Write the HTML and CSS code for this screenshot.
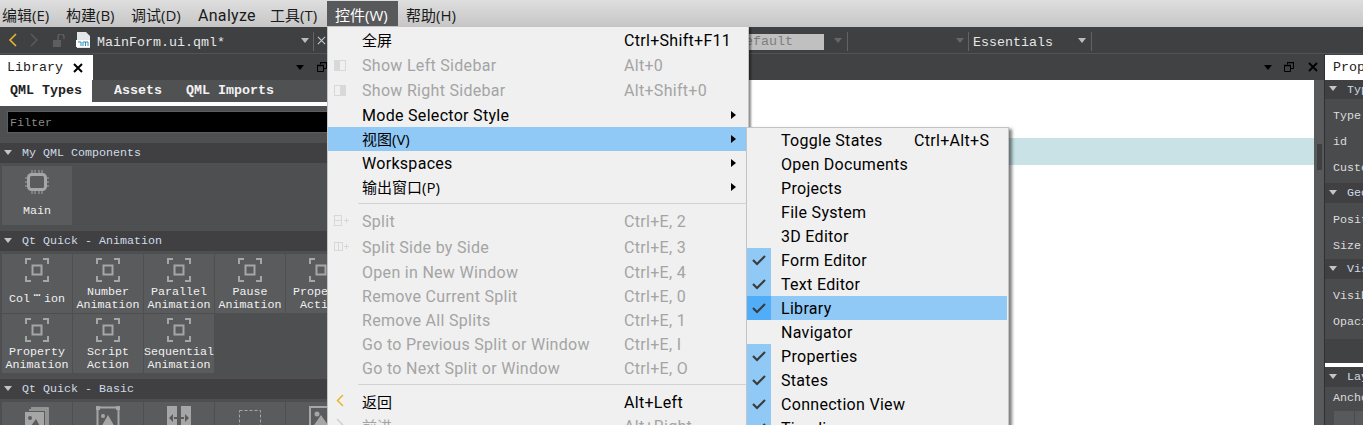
FILE: index.html
```html
<!DOCTYPE html>
<html lang="zh">
<head>
<meta charset="utf-8">
<title>Qt Creator</title>
<link rel="stylesheet" href="styles.css">
</head>
<body>
<svg class="defs" width="0" height="0" aria-hidden="true">
  <symbol id="i-frame" viewBox="0 0 24 24">
    <path d="M1 6V1H6M18 1H23V6M23 18V23H18M6 23H1V18" fill="none" stroke="#a6a6a6" stroke-width="2"/>
    <rect x="7.5" y="7.5" width="9" height="9" fill="none" stroke="#a6a6a6" stroke-width="2"/>
  </symbol>
  <symbol id="i-chip" viewBox="0 0 24 24">
    <rect x="3.5" y="4.5" width="17" height="15" rx="3" fill="none" stroke="#a6a6a6" stroke-width="3"/>
    <path d="M7 0V3M10 0V3M14 0V3M17 0V3M7 21V24M10 21V24M14 21V24M17 21V24M0 8H3M0 12H3M0 16H3M21 8H24M21 12H24M21 16H24" stroke="#a6a6a6" stroke-width="1"/>
  </symbol>
  <symbol id="i-stack" viewBox="0 0 24 24">
    <path d="M6 2H23V19" fill="none" stroke="#a6a6a6" stroke-width="1.5"/>
    <path d="M4 4H21V21" fill="none" stroke="#a6a6a6" stroke-width="1.5"/>
    <rect x="0" y="6" width="19" height="18" fill="#a6a6a6"/>
    <circle cx="5" cy="12" r="2" fill="#5a5b5d"/>
    <path d="M3 24L11 13L17 24Z" fill="#5a5b5d"/>
  </symbol>
  <symbol id="i-border" viewBox="0 0 24 24">
    <rect x="1.500" y="1.500" width="21" height="21" fill="none" stroke="#a6a6a6" stroke-width="2"/>
    <path d="M0 0h4v4H0zM20 0h4v4h-4z" fill="#a6a6a6"/>
    <path d="M4 23L12 9L20 23Z" fill="#a6a6a6"/>
    <circle cx="7" cy="10" r="2" fill="#a6a6a6"/>
  </symbol>
  <symbol id="i-flip" viewBox="0 0 24 24">
    <path d="M0 0H10V24H0ZM14 0H24V24H14Z" fill="#a6a6a6"/>
    <path d="M2 12L6 8V16ZM22 12L18 8V16Z" fill="#5a5b5d"/>
    <path d="M7 11H10V13H7ZM14 11H17V13H14Z" fill="#5a5b5d"/>
  </symbol>
  <symbol id="i-dash" viewBox="0 0 24 24">
    <rect x="1.500" y="4.500" width="21" height="20" fill="none" stroke="#a6a6a6" stroke-dasharray="3 2"/>
  </symbol>
  <symbol id="i-image" viewBox="0 0 24 24">
    <rect x="1" y="1" width="22" height="23" fill="none" stroke="#a6a6a6" stroke-width="2"/>
    <circle cx="8" cy="8" r="2.500" fill="#a6a6a6"/>
    <path d="M3 22L12 9L21 22Z" fill="#a6a6a6"/>
  </symbol>
  <symbol id="i-check" viewBox="0 0 14 12">
    <path d="M1 6L5 10L13 2" fill="none" stroke="#3a3a3a" stroke-width="2"/>
  </symbol>
  <symbol id="i-float" viewBox="0 0 10 10">
    <path d="M3.500 2.500V.5H9.500V6.500H7M.5 3.500H6.500V9.500H.5Z" fill="none" stroke="#000" stroke-width="1"/>
    <path d="M3 .5H10M0 3.500H7" stroke="#000" stroke-width="1.500"/>
  </symbol>
  <symbol id="i-close" viewBox="0 0 10 10">
    <path d="M1 1L9 9M9 1L1 9" stroke="#000" stroke-width="1.800"/>
  </symbol>
</svg>

<div class="app">
  <nav class="menubar">
    <span class="top w-e cjk">编辑(E)</span>
    <span class="top w-b cjk">构建(B)</span>
    <span class="top w-d cjk">调试(D)</span>
    <span class="top w-a">Analyze</span>
    <span class="top w-t cjk">工具(T)</span>
    <span class="top top-on cjk">控件(W)</span>
    <span class="top cjk">帮助(H)</span>
  </nav>

  <div class="toolbar">
    <svg class="tb-nav" width="10" height="14" viewBox="0 0 10 14"><path d="M8 1L2 7L8 13" fill="none" stroke="#e5b72b" stroke-width="1.600"/></svg>
    <svg class="tb-nav" width="10" height="14" viewBox="0 0 10 14"><path d="M2 1L8 7L2 13" fill="none" stroke="#595a5c" stroke-width="1.600"/></svg>
    <svg class="tb-lock" width="12" height="13" viewBox="0 0 12 13"><path d="M0 6H8V13H0Z" fill="#5d5e60"/><path d="M5 6V3A2.500 2.500 0 0 1 11 3V5" fill="none" stroke="#5d5e60" stroke-width="1.500"/></svg>
    <svg class="tb-file" width="15" height="16" viewBox="0 0 15 16"><path d="M1 0H10L14 4V16H1Z" fill="#e4e6e8"/><rect x="0" y="8" width="14" height="7" fill="#fff"/><path d="M2 10H5V14M7 14V10H12V14M9.500 10V14" fill="none" stroke="#2c8fb8" stroke-width="1"/></svg>
    <span class="tb-name">MainForm.ui.qml*</span>
    <i class="tri tri-light tb-arrow"></i>
    <i class="tb-sep"></i>
    <svg class="tb-x" width="9" height="9" viewBox="0 0 10 10"><path d="M1 1L9 9M9 1L1 9" stroke="#c8c8c8" stroke-width="1.200"/></svg>
    <span class="tb-combo">Default</span>
    <i class="tri tri-dim tb-arrow2"></i>
    <i class="tb-sep"></i>
    <i class="tri tri-dim tb-arrow3"></i>
    <i class="tb-sep tb-sep3"></i>
    <span class="tb-kit">Essentials</span>
    <i class="tri tri-light tb-arrow4"></i>
    <i class="tb-sep"></i>
  </div>

  <main class="workspace">
    <section class="left">
      <header class="dock-head">
        <div class="dock-tab lib-tab"><span>Library</span>
          <svg class="tab-x" width="10" height="10" viewBox="0 0 10 10"><path d="M1 1L9 9M9 1L1 9" stroke="#000" stroke-width="2"/></svg>
        </div>
        <div class="dock-tools left-tools">
          <i class="tri tri-black"></i>
          <svg width="10" height="10"><use href="#i-float"/></svg>
        </div>
      </header>
      <div class="lib-tabs">
        <span class="lib-t lib-t-on">QML Types</span>
        <div class="lib-t-rest">
          <span class="lib-t lib-t-a">Assets</span>
          <span class="lib-t lib-t-b">QML Imports</span>
        </div>
      </div>
      <div class="left-body">
        <div class="filter"><span>Filter</span></div>

        <h3 class="sec"><i class="tri tri-sec"></i>My QML Components</h3>
        <div class="tiles">
          <div class="tile"><svg class="ico"><use href="#i-chip"/></svg><div class="lbl">Main</div></div>
        </div>

        <h3 class="sec"><i class="tri tri-sec"></i>Qt Quick - Animation</h3>
        <div class="tiles">
          <div class="tile"><svg class="ico"><use href="#i-frame"/></svg><div class="lbl">Col<span class="ell">⋯</span>ion</div></div>
          <div class="tile"><svg class="ico"><use href="#i-frame"/></svg><div class="lbl">Number<br>Animation</div></div>
          <div class="tile"><svg class="ico"><use href="#i-frame"/></svg><div class="lbl">Parallel<br>Animation</div></div>
          <div class="tile"><svg class="ico"><use href="#i-frame"/></svg><div class="lbl">Pause<br>Animation</div></div>
          <div class="tile"><svg class="ico"><use href="#i-frame"/></svg><div class="lbl">Property<br>Action</div></div>
          <div class="tile"><svg class="ico"><use href="#i-frame"/></svg><div class="lbl">Property<br>Animation</div></div>
          <div class="tile"><svg class="ico"><use href="#i-frame"/></svg><div class="lbl">Script<br>Action</div></div>
          <div class="tile"><svg class="ico"><use href="#i-frame"/></svg><div class="lbl">Sequential<br>Animation</div></div>
        </div>

        <h3 class="sec"><i class="tri tri-sec"></i>Qt Quick - Basic</h3>
        <div class="tiles">
          <div class="tile"><svg class="ico"><use href="#i-stack"/></svg></div>
          <div class="tile"><svg class="ico"><use href="#i-border"/></svg></div>
          <div class="tile"><svg class="ico"><use href="#i-flip"/></svg></div>
          <div class="tile"><svg class="ico"><use href="#i-dash"/></svg></div>
          <div class="tile"><svg class="ico"><use href="#i-image"/></svg></div>
        </div>
      </div>
    </section>

    <section class="center">
      <header class="dock-head center-head">
        <div class="dock-tools center-tools">
          <i class="tri tri-black"></i>
          <svg width="10" height="10"><use href="#i-float"/></svg>
          <svg width="10" height="10"><use href="#i-close"/></svg>
        </div>
      </header>
      <div class="canvas-wrap">
        <div class="canvas"><div class="band"></div></div>
        <div class="scroll"><div class="thumb"></div></div>
      </div>
    </section>

    <section class="right">
      <header class="dock-head"><div class="dock-tab prop-tab">Properties</div></header>
      <h3 class="sec psec psec-first"><i class="tri tri-sec"></i>Type</h3>
      <div class="props"><p>Type</p><p>id</p><p>Custom</p></div>
      <h3 class="sec psec"><i class="tri tri-sec"></i>Geometry</h3>
      <div class="props props-two"><p>Position</p><p>Size</p></div>
      <h3 class="sec psec"><i class="tri tri-sec"></i>Visibility</h3>
      <div class="props props-two"><p>Visible</p><p>Opacity</p></div>
      <div class="prop-gap"></div>
      <h3 class="sec psec"><i class="tri tri-sec"></i>Layout</h3>
      <div class="anchors">
        <p>Anchors</p>
        <div class="anchor-btns"><i></i><i></i></div>
      </div>
    </section>
  </main>

  <div class="menu main-menu">
    <div class="row r-tall"><span class="t cjk">全屏</span><span class="k">Ctrl+Shift+F11</span></div>
    <div class="row r-tall off">
      <svg class="mi" width="13" height="11" viewBox="0 0 13 11"><rect x=".5" y=".5" width="11" height="10" fill="none" stroke="#d8d8d8"/><rect x="1" y="1" width="5" height="9" fill="#d8d8d8"/></svg>
      <span class="t">Show Left Sidebar</span><span class="k">Alt+0</span></div>
    <div class="row r-tall off">
      <svg class="mi" width="13" height="11" viewBox="0 0 13 11"><rect x=".5" y=".5" width="11" height="10" fill="none" stroke="#d8d8d8"/><rect x="6" y="1" width="5" height="9" fill="#d8d8d8"/></svg>
      <span class="t">Show Right Sidebar</span><span class="k">Alt+Shift+0</span></div>
    <div class="row"><span class="t">Mode Selector Style</span><i class="tri-r"></i></div>
    <div class="row on"><span class="t cjk">视图(V)</span><i class="tri-r"></i></div>
    <div class="row"><span class="t">Workspaces</span><i class="tri-r"></i></div>
    <div class="row"><span class="t cjk">输出窗口(P)</span><i class="tri-r"></i></div>
    <div class="sep"></div>
    <div class="row r-split off">
      <svg class="mi" width="15" height="11" viewBox="0 0 15 11"><rect x=".5" y=".5" width="7" height="10" fill="none" stroke="#d8d8d8"/><path d="M0 5.500H8M10 5.500H15M12.500 3V8" stroke="#d8d8d8"/></svg>
      <span class="t">Split</span><span class="k">Ctrl+E, 2</span></div>
    <div class="row r-split off">
      <svg class="mi" width="15" height="11" viewBox="0 0 15 11"><rect x=".5" y="1.500" width="8" height="8" fill="none" stroke="#d8d8d8"/><path d="M4.500 1V10M10 5.500H15M12.500 3V8" stroke="#d8d8d8"/></svg>
      <span class="t">Split Side by Side</span><span class="k">Ctrl+E, 3</span></div>
    <div class="row off"><span class="t">Open in New Window</span><span class="k">Ctrl+E, 4</span></div>
    <div class="row off"><span class="t">Remove Current Split</span><span class="k">Ctrl+E, 0</span></div>
    <div class="row off"><span class="t">Remove All Splits</span><span class="k">Ctrl+E, 1</span></div>
    <div class="row off"><span class="t">Go to Previous Split or Window</span><span class="k">Ctrl+E, I</span></div>
    <div class="row off"><span class="t">Go to Next Split or Window</span><span class="k">Ctrl+E, O</span></div>
    <div class="sep"></div>
    <div class="row r-nav">
      <svg class="mi mi-back" width="8" height="13" viewBox="0 0 8 13"><path d="M7 1L1.500 6.500L7 12" fill="none" stroke="#e5b72b" stroke-width="1.500"/></svg>
      <span class="t cjk">返回</span><span class="k">Alt+Left</span></div>
    <div class="row r-nav off">
      <svg class="mi mi-back" width="8" height="13" viewBox="0 0 8 13"><path d="M1 1L6.500 6.500L1 12" fill="none" stroke="#d0d0d0" stroke-width="1.500"/></svg>
      <span class="t cjk">前进</span><span class="k">Alt+Right</span></div>
  </div>

  <div class="menu sub-menu">
    <div class="srow"><span class="c"></span><span class="st">Toggle States</span><span class="sk">Ctrl+Alt+S</span></div>
    <div class="srow"><span class="c"></span><span class="st">Open Documents</span></div>
    <div class="srow"><span class="c"></span><span class="st">Projects</span></div>
    <div class="srow"><span class="c"></span><span class="st">File System</span></div>
    <div class="srow"><span class="c"></span><span class="st">3D Editor</span></div>
    <div class="srow"><span class="c c-on"><svg width="14" height="12"><use href="#i-check"/></svg></span><span class="st">Form Editor</span></div>
    <div class="srow"><span class="c c-on"><svg width="14" height="12"><use href="#i-check"/></svg></span><span class="st">Text Editor</span></div>
    <div class="srow on"><span class="c c-hot"><svg width="14" height="12"><use href="#i-check"/></svg></span><span class="st">Library</span></div>
    <div class="srow"><span class="c"></span><span class="st">Navigator</span></div>
    <div class="srow"><span class="c c-on"><svg width="14" height="12"><use href="#i-check"/></svg></span><span class="st">Properties</span></div>
    <div class="srow"><span class="c c-on"><svg width="14" height="12"><use href="#i-check"/></svg></span><span class="st">States</span></div>
    <div class="srow"><span class="c c-on"><svg width="14" height="12"><use href="#i-check"/></svg></span><span class="st">Connection View</span></div>
    <div class="srow"><span class="c c-on"><svg width="14" height="12"><use href="#i-check"/></svg></span><span class="st">Timeline</span></div>
  </div>
</div>
</body>
</html>
```

FILE: styles.css
```css
* { box-sizing: border-box; }
html, body { margin: 0; padding: 0; }
body {
  width: 1363px;
  height: 425px;
  overflow: hidden;
  background: #414244;
  font-family: Roboto, "Noto Sans CJK SC", sans-serif;
}
.defs { position: absolute; }
.app {
  position: relative;
  width: 1363px;
  height: 425px;
  overflow: hidden;
  display: flex;
  flex-direction: column;
}
p, h3 { margin: 0; font-weight: normal; }
.cjk { font-family: "Open Sans", "Noto Sans CJK SC", sans-serif; font-size: 15px; letter-spacing: 0; }

/* menu bar */
.menubar {
  height: 27px;
  flex: none;
  display: flex;
  padding-top: 1px;
  background: linear-gradient(#dedede, #c6c6c6);
  font-size: 16px;
  color: #1a1a1a;
}
.top { height: 25px; line-height: 28px; padding: 0 8px; }
.w-e { padding: 0 0 0 2px; width: 66px; }
.w-b { padding: 0; width: 65px; }
.w-d { padding: 0; width: 67px; }
.w-a { padding: 0; width: 72px; line-height: 30px; letter-spacing: .3px; }
.w-t { padding: 0; width: 57px; }
.top-on { width: 71px; background: #58595b; color: #fff; }

/* toolbar */
.toolbar {
  height: 27px;
  flex: none;
  display: flex;
  align-items: center;
  background: #3f4042;
  border-bottom: 1px solid #525355;
  font: 13.33px "Liberation Mono", monospace;
  color: #e6e6e6;
}
.tb-nav { flex: none; margin-left: 8px; }
.tb-nav + .tb-nav { margin-left: 11px; }
.tb-lock { flex: none; margin-left: 14px; }
.tb-file { flex: none; margin-left: 11px; }
.tb-name { flex: none; margin-left: 6px; width: 204px; padding-top: 4px; }
.tb-arrow { margin-left: 0; }
.tb-sep { flex: none; width: 1px; height: 19px; background: #626365; margin-top: 3px; }
.tb-arrow + .tb-sep { margin-left: 4px; }
.tb-x { flex: none; margin-left: 3px; }
.tb-combo {
  flex: none;
  margin: 4px 0 0 408px;
  width: 90px;
  height: 16px;
  line-height: 16px;
  padding-left: 3px;
  background: #c0c0c0;
  color: #7e7e7e;
  overflow: hidden;
}
.tb-arrow2 { margin: 0 5px 0 10px; }
.tb-arrow3 { margin: 0 4px 0 108px; }
.tb-kit { flex: none; width: 105px; margin-left: 4px; padding-top: 4px; }
.tb-arrow4 { margin-right: 5px; }

.tri {
  display: inline-block;
  flex: none;
  width: 0;
  height: 0;
  border-style: solid;
  border-width: 5px 4px 0;
  border-color: transparent;
}
.tri-light { border-top-color: #bcbcbc; }
.tri-dim { border-top-color: #66676a; }
.tri-black { border-top-color: #000; }
.tri-sec { border-top-color: #c4c4c4; margin: 0 10px 2px 4px; }

/* workspace */
.workspace { flex: 1; min-height: 0; display: flex; }
.dock-head {
  height: 26px;
  flex: none;
  display: flex;
  align-items: flex-end;
  justify-content: space-between;
  background: #414244;
}
.dock-tab {
  height: 25px;
  background: #fff;
  color: #222;
  font: 13.33px/27px "Liberation Mono", monospace;
  padding-left: 7px;
  display: flex;
  align-items: center;
}
.dock-tools { display: flex; align-items: center; height: 26px; }

/* left */
.left { width: 330px; flex: none; display: flex; flex-direction: column; overflow: hidden; }
.lib-tab { width: 93px; }
.tab-x { flex: none; margin-left: 10px; }
.left-tools { gap: 15px; padding-right: 3px; }
.left-tools .tri, .center-tools .tri { margin-right: -2px; }
.lib-tabs {
  height: 22px;
  flex: none;
  display: flex;
  background: #414244;
  font: bold 13.33px/22px "Liberation Mono", monospace;
}
.lib-t { display: block; }
.lib-t-on { width: 92px; padding-left: 10px; background: #fff; color: #222; }
.lib-t-rest { flex: 1; display: flex; background: #505153; color: #f2f2f2; }
.lib-t-a { margin-left: 22px; width: 72px; }
.lib-t-b { white-space: nowrap; }
.left-body {
  flex: 1;
  background: #4e4f51;
  border-top: 4px solid #fff;
  padding-top: 5px;
}
.filter {
  height: 22px;
  margin: 0 0 10px 7px;
  background: #000;
  border: 1px solid #5c5d5f;
  color: #8a8a8a;
  font: 11.67px/22px "Liberation Mono", monospace;
  padding-left: 2px;
}
.sec {
  height: 20px;
  background: #404042;
  color: #cfdbe6;
  font: 11.67px/20px "Liberation Mono", monospace;
  display: flex;
  align-items: center;
  white-space: nowrap;
}
.tiles {
  display: grid;
  grid-template-columns: repeat(5, 70px);
  grid-auto-rows: 59px;
  gap: 1px;
  padding: 3px 0 6px 2px;
}
.tile {
  background: #5a5b5d;
  color: #f0f0f0;
  display: flex;
  flex-direction: column;
  align-items: center;
  font: 11.67px/13px "Liberation Mono", monospace;
  text-align: center;
}
.ico { width: 24px; height: 24px; margin-top: 4px; flex: none; }
.lbl { height: 26px; margin-top: 4px; white-space: nowrap; }
.tile .lbl:not(:has(br)) { line-height: 26px; }
.ell { display: inline-block; width: 14px; line-height: 1; text-align: center; vertical-align: 3px; }

/* center */
.center { flex: 1; min-width: 0; display: flex; flex-direction: column; }
.center-tools { gap: 14px; padding-right: 6px; margin-left: auto; }
.canvas-wrap { flex: 1; display: flex; min-height: 0; }
.canvas { flex: 1; background: #fff; padding-top: 58px; }
.band { height: 27px; background: #c8e2e6; }
.scroll { width: 10px; flex: none; background: #58595b; padding: 64px 2px 0 3px; }
.thumb { height: 26px; background: #3f4042; }

/* right */
.right { width: 39px; flex: none; display: flex; flex-direction: column; overflow: hidden; background: #4a4b4d; border-left: 1px solid #2f3032; }
.prop-tab { width: 100%; padding-left: 8px; overflow: hidden; white-space: nowrap; }
.psec { font-size: 11.67px; flex: none; }
.psec-first { height: 19px; }
.props {
  flex: none;
  color: #dcdcdc;
  font: 11.67px/26px "Liberation Mono", monospace;
  padding: 4px 0 0 8px;
  white-space: nowrap;
  height: 84px;
}
.props-two { height: 56px; }
.prop-gap { height: 28px; flex: none; background: #414244; border-bottom: 4px solid #fff; margin-top: 4px; }
.anchors { flex: none; color: #dcdcdc; font: 11.67px/22px "Liberation Mono", monospace; padding: 0 0 0 8px; white-space: nowrap; }
.anchor-btns { display: flex; gap: 1px; margin: 2px 0 0 1px; }
.anchor-btns i { display: block; width: 20px; height: 20px; background: #58595b; flex: none; }

/* menus */
.menu {
  position: absolute;
  background: #f0f0f0;
  border: 1px solid #c4c4c4;
  font-size: 16px;
  letter-spacing: .3px;
  color: #000;
}
.main-menu {
  left: 327px;
  top: 26px;
  width: 422px;
  height: 410px;
  padding-top: 1px;
  box-shadow: 2px 2px 2px rgba(0,0,0,.45);
}
.row {
  position: relative;
  height: 24px;
  line-height: 25px;
  display: flex;
}
.r-tall { height: 25px; }
.r-split { height: 26px; line-height: 27px; }
.r-nav { line-height: 27px; }
.t { margin-left: 34px; white-space: nowrap; width: 262px; flex: none; }
.k { white-space: nowrap; }
.off { color: #a4a4a4; }
.on { background: #90c8f6; }
.mi { position: absolute; left: 6px; top: 7px; }
.mi-back { left: 8px; top: 5px; }
.tri-r {
  position: absolute;
  left: 403px;
  top: 8px;
  width: 0;
  height: 0;
  border-style: solid;
  border-width: 4px 0 4px 5px;
  border-color: transparent transparent transparent #000;
}
.sep { height: 9px; margin-left: 30px; position: relative; }
.sep::after { content: ""; display: block; position: absolute; left: 0; right: 0; top: 4px; height: 1px; background: #d2d2d2; }

.sub-menu {
  left: 746px;
  top: 127px;
  width: 263px;
  height: 320px;
  box-shadow: 3px 2px 3px rgba(0,0,0,.5);
}
.srow {
  height: 24px;
  line-height: 25px;
  display: flex;
  margin-right: 1px;
}
.c { width: 24px; flex: none; display: flex; align-items: center; justify-content: center; }
.c-on { background: #90c8f6; }
.c-hot { background: #52adf9; }
.st { margin-left: 10px; width: 133px; white-space: nowrap; flex: none; }
.sk { white-space: nowrap; }
```
